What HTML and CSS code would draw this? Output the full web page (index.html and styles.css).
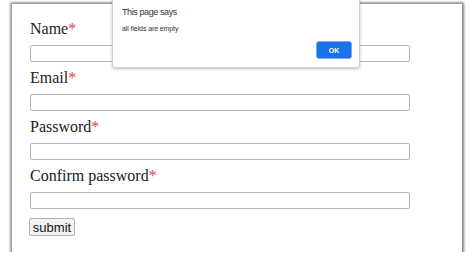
FILE: index.html
```html
<!DOCTYPE html>
<html lang="en">
<head>
    <meta charset="UTF-8">
    <title>Register</title>
    <link rel="stylesheet" href="styles.css">
</head>
<body>
    <div class="window">
        <form class="reg-form">
            <label class="field-label">Name<span class="req">*</span></label>
            <input type="text" class="field-input">
            <label class="field-label">Email<span class="req">*</span></label>
            <input type="text" class="field-input">
            <label class="field-label">Password<span class="req">*</span></label>
            <input type="password" class="field-input">
            <label class="field-label">Confirm password<span class="req">*</span></label>
            <input type="password" class="field-input">
            <div><button type="button" class="submit-btn">submit</button></div>
        </form>
    </div>

    <div class="alert-box">
        <div class="alert-title">This page says</div>
        <div class="alert-msg">all fields are empty</div>
        <button type="button" class="alert-ok">OK</button>
    </div>
</body>
</html>
```

FILE: styles.css
```css
body {
    margin: 0;
    background: #ffffff;
    font-family: "Liberation Serif", serif;
}

.window {
    margin: 4px 0 0 12px;
    width: 450px;
    height: 248px;
    box-sizing: border-box;
    background: #ffffff;
    box-shadow: 0 0 2px 2px rgba(0,0,0,0.35), 1px 1px 4px rgba(0,0,0,0.3);
}

.reg-form {
    display: flex;
    flex-direction: column;
    align-items: flex-start;
    padding: 16px 0 0 18px;
}

.field-label {
    font-size: 16px;
    line-height: 18px;
    color: #222;
    margin-bottom: 7px;
}

.req {
    color: #e04848;
}

.field-input {
    width: 380px;
    height: 17px;
    box-sizing: border-box;
    border: 1px solid #b4b4b4;
    border-radius: 2px;
    margin: 0 0 7px 0;
    padding: 0;
    background: #fff;
}

.submit-btn {
    margin: 2px 0 0 -1px;
    width: 46px;
    height: 18px;
    padding: 0;
    font-family: "Liberation Sans", Arial, sans-serif;
    font-size: 13px;
    color: #111;
    background: #f2f2f2;
    border: 1px solid #b0b0b0;
    border-radius: 2px;
}

.alert-box {
    position: absolute;
    top: -1px;
    left: 112px;
    width: 248px;
    height: 69px;
    box-sizing: border-box;
    background: #ffffff;
    border: 1px solid #d0d0d0;
    border-radius: 0 0 3px 3px;
    box-shadow: 0 1px 3px rgba(0,0,0,0.25);
    font-family: "Liberation Sans", Arial, sans-serif;
    padding: 6px 0 0 9px;
}

.alert-title {
    font-size: 9px;
    line-height: 12px;
    letter-spacing: -0.4px;
    color: #333;
}

.alert-msg {
    font-size: 7px;
    line-height: 10px;
    letter-spacing: -0.1px;
    color: #333;
    margin-top: 6px;
}

.alert-ok {
    position: absolute;
    left: 203px;
    top: 41px;
    width: 36px;
    height: 18px;
    padding: 0;
    background: #1a73e8;
    border: 1px solid #7aa9f0;
    border-radius: 3px;
    color: #ffffff;
    font-family: "Liberation Sans", Arial, sans-serif;
    font-size: 7px;
    font-weight: bold;
}
```
